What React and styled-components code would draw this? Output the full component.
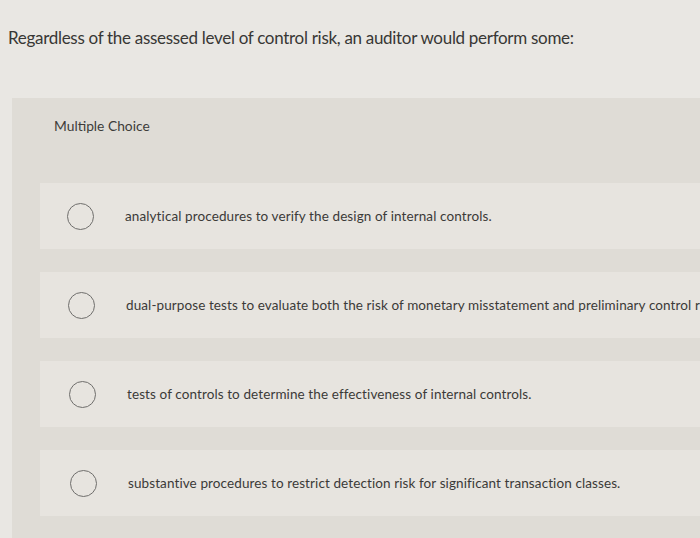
import React from 'react'
import styled, { createGlobalStyle } from 'styled-components'

const GlobalStyle = createGlobalStyle`
    body {
        margin: 0;
        background: #e9e7e3;
        font-family: Lato, "Open Sans", sans-serif;
    }
`

const options = [
    'analytical procedures to verify the design of internal controls.',
    'dual-purpose tests to evaluate both the risk of monetary misstatement and preliminary control risk.',
    'tests of controls to determine the effectiveness of internal controls.',
    'substantive procedures to restrict detection risk for significant transaction classes.'
]

export default function App() {
    return (
        <Page>
            <GlobalStyle />
            <Question>Regardless of the assessed level of control risk, an auditor would perform some:</Question>
            <Panel>
                <Title>Multiple Choice</Title>
                <OptionList>
                    {options.map((text, i) => (
                        <Option key={i} shift={i}>
                            <Radio />
                            <OptionText>{text}</OptionText>
                        </Option>
                    ))}
                </OptionList>
            </Panel>
        </Page>
    )
}

const Page = styled.div`
    width: 700px;
    height: 538px;
    overflow: hidden;
    background: #e9e7e3;
`

const Question = styled.div`
    height: 98px;
    box-sizing: border-box;
    padding: 27px 0 0 8px;
    font-size: 17px;
    letter-spacing: -0.3px;
    color: #383735;
    white-space: nowrap;
`

const Panel = styled.div`
    margin-left: 12px;
    height: 440px;
    background: #dfdcd6;
    padding-left: 28px;
`

const Title = styled.div`
    height: 85px;
    box-sizing: border-box;
    padding: 19px 0 0 14px;
    font-size: 13.8px;
    color: #3d3c3a;
`

const OptionList = styled.div`
    display: flex;
    flex-direction: column;
    gap: 23px;
`

const Option = styled.div`
    height: 66px;
    display: flex;
    align-items: center;
    gap: 31px;
    padding-left: ${p => 27 + p.shift}px;
    background: #e7e4df;
    white-space: nowrap;
    overflow: hidden;
`

const Radio = styled.span`
    flex: none;
    width: 25px;
    height: 25px;
    border: 1.3px solid #6f6e6c;
    border-radius: 50%;
`

const OptionText = styled.span`
    font-size: 13.5px;
    letter-spacing: 0.1px;
    color: #3b3a38;
`
